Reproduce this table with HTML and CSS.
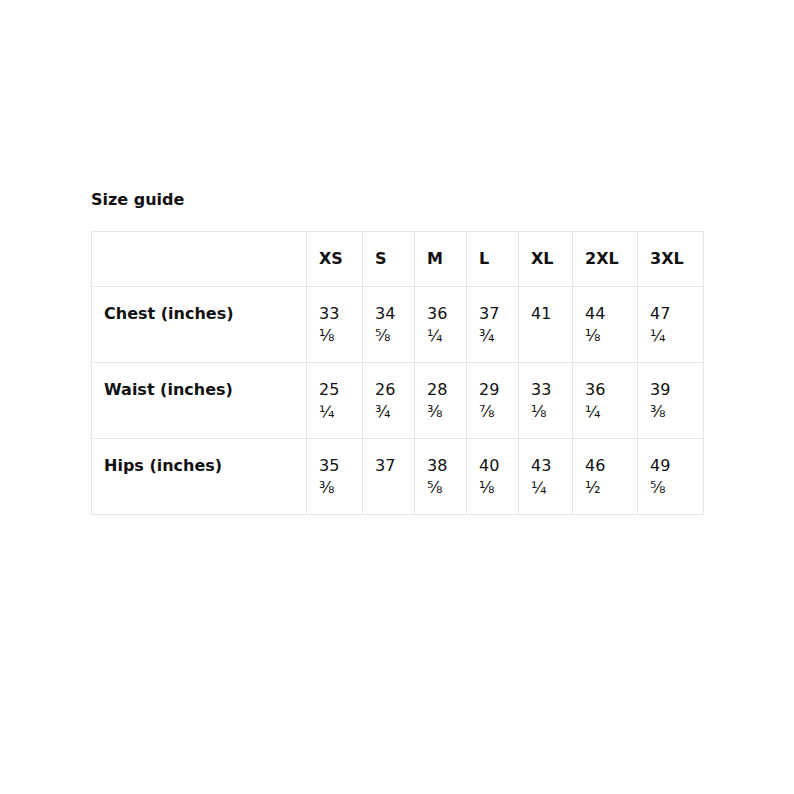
FILE: index.html
```html
<!DOCTYPE html>
<html lang="en">
<head>
<meta charset="utf-8">
<title>Size guide</title>
<link rel="stylesheet" href="styles.css">
</head>
<body>
<main class="page">
  <h2 class="title">Size guide</h2>
  <table class="sizes">
    <colgroup>
      <col class="c-label"><col class="c-xs"><col class="c-s"><col class="c-m"><col class="c-l"><col class="c-xl"><col class="c-2xl"><col class="c-3xl">
    </colgroup>
    <thead>
      <tr><th></th><th>XS</th><th>S</th><th>M</th><th>L</th><th>XL</th><th>2XL</th><th>3XL</th></tr>
    </thead>
    <tbody>
      <tr>
        <th class="row-label">Chest (inches)</th>
        <td>33<span class="frac">⅛</span></td>
        <td>34<span class="frac">⅝</span></td>
        <td>36<span class="frac">¼</span></td>
        <td>37<span class="frac">¾</span></td>
        <td>41</td>
        <td>44<span class="frac">⅛</span></td>
        <td>47<span class="frac">¼</span></td>
      </tr>
      <tr>
        <th class="row-label">Waist (inches)</th>
        <td>25<span class="frac">¼</span></td>
        <td>26<span class="frac">¾</span></td>
        <td>28<span class="frac">⅜</span></td>
        <td>29<span class="frac">⅞</span></td>
        <td>33<span class="frac">⅛</span></td>
        <td>36<span class="frac">¼</span></td>
        <td>39<span class="frac">⅜</span></td>
      </tr>
      <tr>
        <th class="row-label">Hips (inches)</th>
        <td>35<span class="frac">⅜</span></td>
        <td>37</td>
        <td>38<span class="frac">⅝</span></td>
        <td>40<span class="frac">⅛</span></td>
        <td>43<span class="frac">¼</span></td>
        <td>46<span class="frac">½</span></td>
        <td>49<span class="frac">⅝</span></td>
      </tr>
    </tbody>
  </table>
</main>
</body>
</html>
```
FILE: styles.css
```css
html, body {
  margin: 0;
  padding: 0;
  background: #ffffff;
}
body {
  font-family: "DejaVu Sans", "Liberation Sans", sans-serif;
  font-size: 16px;
  line-height: 22px;
  color: #111111;
}
.page {
  padding: 189px 0 0 91px;
}
.title {
  margin: 0 0 20px 0;
  font-size: 16px;
  line-height: 22px;
  font-weight: bold;
}
.sizes {
  border-collapse: collapse;
  table-layout: fixed;
  width: 612px;
}
.c-label { width: 215px; }
.c-xs { width: 56px; }
.c-s { width: 52px; }
.c-m { width: 52px; }
.c-l { width: 52px; }
.c-xl { width: 54px; }
.c-2xl { width: 65px; }
.c-3xl { width: 66px; }
.sizes th,
.sizes td {
  border: 1px solid #e6e6e6;
  padding: 16px 12px;
  text-align: left;
  vertical-align: top;
}
.sizes tbody th,
.sizes tbody td {
  padding-bottom: 15px;
}
.sizes th {
  font-weight: bold;
}
.sizes td {
  font-weight: normal;
}
.frac {
  display: block;
}
```
